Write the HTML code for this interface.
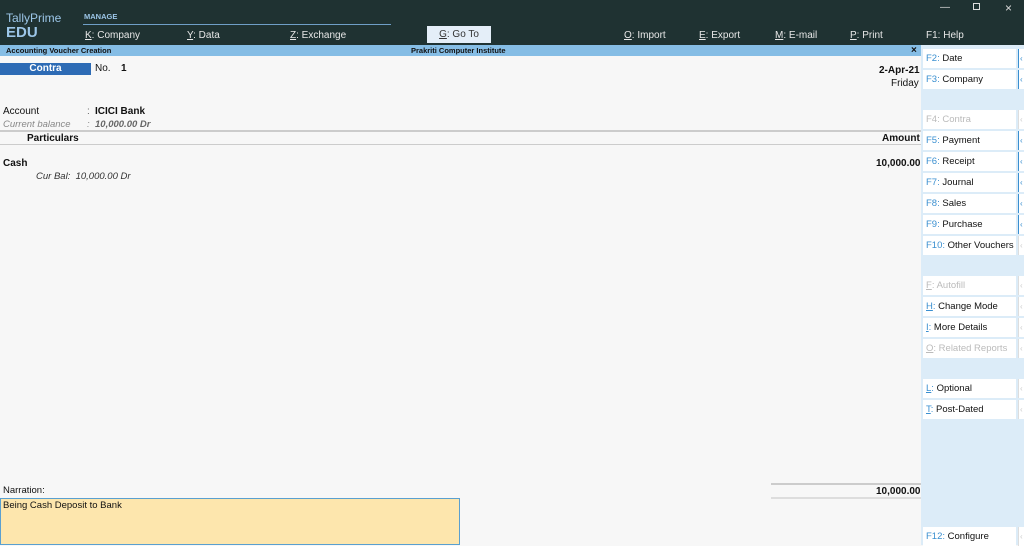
<!DOCTYPE html>
<html><head><style>
*{margin:0;padding:0;box-sizing:border-box}
body{width:1024px;height:545px;overflow:hidden;background:#f7f7f7;font-family:"Liberation Sans",sans-serif;font-size:10px;color:#111;position:relative}
.a{position:absolute;white-space:nowrap}
.hd{left:0;top:0;width:1024px;height:45px;background:#1f3232}
.m{color:#e8e8e8;font-size:10px;top:30px}
.m u{text-decoration:underline}
.bar{left:0;top:45px;width:921px;height:11px;background:#85bde5;font-size:7.5px;font-weight:bold;line-height:11px}
.rp{left:921px;top:45px;width:103px;height:500px;background:#dcecf8}
.b{left:923px;width:93px;height:19px;background:#fff;line-height:19px;padding-left:3px;font-size:9.5px;color:#111}
.b span{color:#3a8fd0}
.b.d{color:#bbb}.b.d span{color:#bbb}
.s{left:1018px;width:6px;height:19px;background:#fff;border-left:1px solid #3a8fd0;color:#3a8fd0;font-size:8px;line-height:19px;padding-left:1px}
.s.d{border-left-color:#ddd;color:#ccc}
</style></head><body>
<div class="a hd"></div>
<div class="a" style="left:6px;top:11px;color:#9cc6e8;font-size:12px">TallyPrime</div>
<div class="a" style="left:6px;top:24px;color:#9cc6e8;font-size:15px;font-weight:bold">EDU</div>
<div class="a" style="left:84px;top:12px;color:#9cc6e8;font-size:7.5px;font-weight:bold">MANAGE</div>
<div class="a" style="left:83px;top:24px;width:308px;height:1px;background:#6f9fc7"></div>
<div class="a m" style="left:85px"><u>K</u>: Company</div>
<div class="a m" style="left:187px"><u>Y</u>: Data</div>
<div class="a m" style="left:290px"><u>Z</u>: Exchange</div>
<div class="a" style="left:427px;top:26px;width:64px;height:17px;background:#e4eef8;color:#333;font-size:10px;line-height:17px;text-align:center"><u>G</u>: Go To</div>
<div class="a m" style="left:624px"><u>O</u>: Import</div>
<div class="a m" style="left:699px"><u>E</u>: Export</div>
<div class="a m" style="left:775px"><u>M</u>: E-mail</div>
<div class="a m" style="left:850px"><u>P</u>: Print</div>
<div class="a m" style="left:926px">F1: Help</div>
<div class="a" style="left:940px;top:2px;color:#ddd;font-size:10px">&#8212;</div>
<div class="a" style="left:973px;top:3px;width:7px;height:7px;border:1px solid #ddd"></div>
<div class="a" style="left:1005px;top:1px;color:#ddd;font-size:12px">&#215;</div>
<div class="a bar"><span class="a" style="left:6px">Accounting Voucher Creation</span><span class="a" style="left:411px">Prakriti Computer Institute</span><span class="a" style="left:911px;font-size:10px">&#215;</span></div>
<div class="a rp"></div>
<div class="a" style="left:0;top:63px;width:91px;height:12px;background:#2d6bb5;color:#fff;font-size:10px;font-weight:bold;text-align:center;line-height:12px">Contra</div>
<div class="a" style="left:95px;top:63px;font-size:10px">No.</div>
<div class="a" style="left:121px;top:63px;font-size:10px;font-weight:bold">1</div>
<div class="a" style="left:879px;top:65px;font-size:10px;font-weight:bold">2-Apr-21</div>
<div class="a" style="left:891px;top:78px;font-size:10px">Friday</div>
<div class="a" style="left:3px;top:106px;font-size:10px">Account</div>
<div class="a" style="left:87px;top:106px;font-size:10px;color:#666">:</div>
<div class="a" style="left:95px;top:106px;font-size:10px;font-weight:bold">ICICI Bank</div>
<div class="a" style="left:3px;top:119px;font-size:9.5px;color:#888;font-style:italic">Current balance</div>
<div class="a" style="left:87px;top:119px;font-size:9.5px;color:#888;font-style:italic">:</div>
<div class="a" style="left:95px;top:119px;font-size:9.5px;color:#666;font-style:italic;font-weight:bold">10,000.00 Dr</div>
<div class="a" style="left:0;top:130px;width:921px;height:2px;background:#ccc"></div>
<div class="a" style="left:27px;top:133px;font-size:10px;font-weight:bold">Particulars</div>
<div class="a" style="left:882px;top:133px;font-size:10px;font-weight:bold">Amount</div>
<div class="a" style="left:0;top:144px;width:921px;height:1px;background:#ccc"></div>
<div class="a" style="left:3px;top:158px;font-size:10px;font-weight:bold">Cash</div>
<div class="a" style="left:876px;top:158px;font-size:10px;font-weight:bold">10,000.00</div>
<div class="a" style="left:36px;top:171px;font-size:9.5px;color:#333;font-style:italic">Cur Bal:&nbsp; 10,000.00 Dr</div>
<div class="a" style="left:3px;top:485px;font-size:9.5px">Narration:</div>
<div class="a" style="left:771px;top:483px;width:150px;height:2px;background:#ccc"></div>
<div class="a" style="left:771px;top:497px;width:150px;height:2px;background:#ddd"></div>
<div class="a" style="left:876px;top:486px;font-size:10px;font-weight:bold">10,000.00</div>
<div class="a" style="left:0;top:498px;width:460px;height:47px;background:#fde6ad;border:1px solid #5aa0d0"></div>
<div class="a" style="left:3px;top:500px;font-size:9.5px">Being Cash Deposit to Bank</div>

<div class="a b" style="top:49px"><span>F2:</span> Date</div><div class="a s" style="top:49px">‹</div>
<div class="a b" style="top:70px"><span>F3:</span> Company</div><div class="a s" style="top:70px">‹</div>
<div class="a b d" style="top:110px"><span>F4:</span> Contra</div><div class="a s d" style="top:110px">‹</div>
<div class="a b" style="top:131px"><span>F5:</span> Payment</div><div class="a s" style="top:131px">‹</div>
<div class="a b" style="top:152px"><span>F6:</span> Receipt</div><div class="a s" style="top:152px">‹</div>
<div class="a b" style="top:173px"><span>F7:</span> Journal</div><div class="a s" style="top:173px">‹</div>
<div class="a b" style="top:194px"><span>F8:</span> Sales</div><div class="a s" style="top:194px">‹</div>
<div class="a b" style="top:215px"><span>F9:</span> Purchase</div><div class="a s" style="top:215px">‹</div>
<div class="a b" style="top:236px"><span>F10:</span> Other Vouchers</div><div class="a s d" style="top:236px">‹</div>
<div class="a b d" style="top:276px"><span><u>F</u>:</span> Autofill</div><div class="a s d" style="top:276px">‹</div>
<div class="a b" style="top:297px"><span><u>H</u>:</span> Change Mode</div><div class="a s d" style="top:297px">‹</div>
<div class="a b" style="top:318px"><span><u>I</u>:</span> More Details</div><div class="a s d" style="top:318px">‹</div>
<div class="a b d" style="top:339px"><span><u>O</u>:</span> Related Reports</div><div class="a s d" style="top:339px">‹</div>
<div class="a b" style="top:379px"><span><u>L</u>:</span> Optional</div><div class="a s d" style="top:379px">‹</div>
<div class="a b" style="top:400px"><span><u>T</u>:</span> Post-Dated</div><div class="a s d" style="top:400px">‹</div>
<div class="a b" style="top:527px"><span>F12:</span> Configure</div><div class="a s d" style="top:527px">‹</div>
</body></html>
